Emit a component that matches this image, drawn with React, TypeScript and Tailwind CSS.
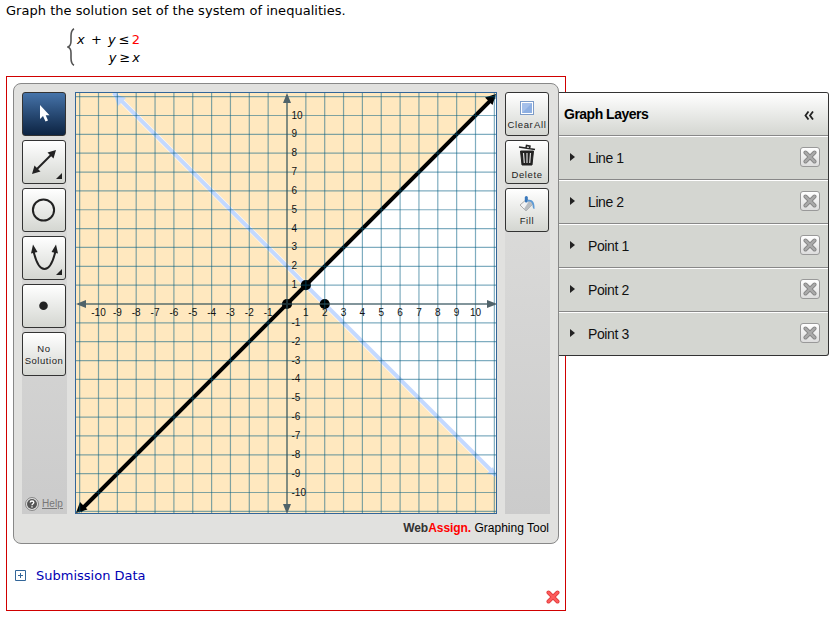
import type { ReactNode } from "react";

const UNIT = 18.85;
const CENTER = 211;
const gridSteps = Array.from({ length: 23 }, (_, i) => i - 11);
const labelSteps = gridSteps.filter((n) => n !== 0 && Math.abs(n) <= 10);
const layers = ["Line 1", "Line 2", "Point 1", "Point 2", "Point 3"];

const px = (x: number) => CENTER + x * UNIT;
const py = (y: number) => CENTER - y * UNIT;

function ToolButton({ active, menu, children }: { active?: boolean; menu?: boolean; children: ReactNode }) {
  return (
    <button
      type="button"
      className={
        active
          ? "relative flex h-11 w-11 flex-col items-center justify-center rounded-[3px] border border-[#333] bg-linear-to-b from-[#4674aa] to-[#0d2443]"
          : "relative flex h-11 w-11 flex-col items-center justify-center rounded-[3px] border border-[#333] bg-linear-to-b from-white to-[#d4d6d1]"
      }
    >
      {children}
      {menu && (
        <svg className="absolute right-[3px] bottom-[4px]" width="6" height="6">
          <path d="M6 0V6H0Z" fill="#222" />
        </svg>
      )}
    </button>
  );
}

function Graph() {
  return (
    <svg width="420" height="420" viewBox="0 0 420 420" className="block">
      <rect width="420" height="420" fill="#ffe8bf" />
      <path d={`M${px(1)} ${py(1)}L${px(12)} ${py(12)}V${py(-10)}Z`} fill="#fff" />

      <path d={`M${px(-9.2)} ${py(11.2)}L${px(11.1)} ${py(-9.1)}`} stroke="#fff" strokeOpacity="0.7" strokeWidth="5.4" />
      <path d={`M${px(-9.2)} ${py(11.2)}L${px(11.1)} ${py(-9.1)}`} stroke="#c3d9ff" strokeWidth="4" />
      <path d="M37 0L50 5L42 13ZM419.500 382.500L411 380.500L417 374Z" fill="#c3d9ff" />
      <path d={`M4 418L${px(11)} ${py(11)}`} stroke="#000" strokeWidth="4" />
      <path d="M0 420L4 409L11.500 416.500ZM420 1L409 4.500L416.500 12Z" fill="#000" />

      {[[0, 0], [1, 1], [2, 0]].map(([x, y]) => (
        <circle key={`${x},${y}`} cx={px(x)} cy={py(y)} r="5.1" fill="#000" />
      ))}

      <g stroke="#005b82" strokeOpacity="0.5" strokeWidth="1.2">
        {gridSteps.filter((n) => n !== 0).map((n) => (
          <path key={n} d={`M${px(n)} 0V420M0 ${py(n)}H420`} />
        ))}
      </g>

      <path d="M211 8V412M8 211H412" stroke="#2f4f58" strokeOpacity="0.6" strokeWidth="2" />
      <path d="M211 0L215 10H207ZM211 421L215 411H207ZM0 211L10 207V215ZM421 211L411 207V215Z" fill="#50636a" />

      <g fontFamily="'Liberation Sans', Arial, sans-serif" fontSize="10" fill="#111">
        {labelSteps.map((n) => (
          <text key={n} x={px(n)} y="222.500" textAnchor="middle">{n}</text>
        ))}
        {labelSteps.map((n) => (
          <text key={n} x="215.500" y={py(n) + 3}>{n}</text>
        ))}
      </g>
    </svg>
  );
}

function CrossIcon({ color, edge, size }: { color: string; edge: string; size: number }) {
  return (
    <svg width={size} height={size} viewBox="0 0 14 14">
      <path d="M2.500 2.500L11.500 11.500M11.500 2.500L2.500 11.500" stroke={edge} strokeWidth="4" strokeLinecap="round" />
      <path d="M2.500 2.500L11.500 11.500M11.500 2.500L2.500 11.500" stroke={color} strokeWidth="2.400" strokeLinecap="round" />
    </svg>
  );
}

function LeftTools() {
  return (
    <div className="flex h-[422px] w-[45px] flex-col gap-1 bg-linear-to-b from-[#e1e1df] to-[#cbcbcb]">
      <ToolButton active>
        <svg width="42" height="42" viewBox="0 0 42 42">
          <path d="M17 12V26L20 23L22.500 28.500L25 27.400L22.700 22.200H26.500Z" fill="#fff" />
        </svg>
      </ToolButton>
      <ToolButton menu>
        <svg width="42" height="42" viewBox="0 0 42 42">
          <path d="M13 29L29 13" stroke="#222" strokeWidth="2" />
          <path d="M9 33L11.500 24.500L17.500 30.500ZM33 9L30.500 17.500L24.500 11.500Z" fill="#222" />
        </svg>
      </ToolButton>
      <ToolButton>
        <svg width="42" height="42" viewBox="0 0 42 42">
          <circle cx="20.500" cy="21" r="10.600" fill="none" stroke="#222" strokeWidth="2" />
        </svg>
      </ToolButton>
      <ToolButton menu>
        <svg width="42" height="42" viewBox="0 0 42 42">
          <path d="M10.500 14C13 25 17 32 21.500 32S30 25 32.500 14" fill="none" stroke="#222" strokeWidth="2" />
          <path d="M10 7.500L14.500 15L8 16.500ZM33 7.500L28.500 15L35 16.500Z" fill="#222" />
        </svg>
      </ToolButton>
      <ToolButton>
        <svg width="42" height="42" viewBox="0 0 42 42">
          <circle cx="20.500" cy="20.700" r="4.300" fill="#222" />
        </svg>
      </ToolButton>
      <ToolButton>
        <span className="pt-0.5 text-[9.500px] leading-3 tracking-[0.55px] text-[#222]">No<br />Solution</span>
      </ToolButton>
      <div className="mt-auto flex items-center gap-[3px] pb-[3px] pl-[3px]">
        <svg width="14" height="14" viewBox="0 0 14 14">
          <circle cx="7" cy="7" r="6.400" fill="#eee" stroke="#666" strokeWidth="0.800" />
          <circle cx="7" cy="7" r="5" fill="#555" />
          <path d="M5.200 5.600C5.200 3.500 8.800 3.500 8.800 5.600C8.800 6.700 7 6.800 7 8.300M7 9.200V10.600" fill="none" stroke="#fff" strokeWidth="1.400" />
        </svg>
        <a href="#" className="text-[10px] leading-3 tracking-[0.1px] text-[#777] underline">Help</a>
      </div>
    </div>
  );
}

function RightTools() {
  return (
    <div className="flex h-[422px] w-[45px] flex-col gap-1 bg-linear-to-b from-[#e1e1df] to-[#cbcbcb] text-[9.500px] leading-3 tracking-[0.6px] text-[#222]">
      <ToolButton>
        <svg className="mt-[3px] mb-[4px]" width="14" height="14" viewBox="0 0 14 14">
          <rect x="0.500" y="0.500" width="13" height="13" fill="#fff" stroke="#7d9cc8" />
          <rect x="2" y="2" width="10" height="10" fill="#8dafe2" />
          <path d="M2 2H12L2 12Z" fill="#a5c0ea" />
        </svg>
        <span className="[word-spacing:-2px] whitespace-nowrap">Clear All</span>
      </ToolButton>
      <ToolButton>
        <svg className="mb-0.5" width="18" height="23" viewBox="0 0 18 23" fill="none" stroke="#222">
          <path d="M1 3L17 5.500M8 3.800L8.500 1.500L12 2.200L11.600 4.300" strokeWidth="1.500" />
          <path d="M2.500 7H15.500L14 21H4Z" fill="#222" />
          <path d="M5.500 9L6.300 19M9 9V19M12.500 9L11.700 19" stroke="#ddd" strokeWidth="1.200" />
        </svg>
        <span>Delete</span>
      </ToolButton>
      <ToolButton>
        <svg className="mt-[2px] mb-[3px]" width="18" height="17" viewBox="0 0 18 17">
          <path d="M2 10L9 4L15 9L8 16Z" fill="#f3f3f3" stroke="#999" strokeWidth="0.800" />
          <path d="M8 16L15 9L11 6L6 14Z" fill="#b9bdc1" />
          <path d="M10 5C14 4 17 7 16.500 14C15 14 14.500 12 14.500 9.500C13.500 7 12 6 10 7Z" fill="#5e9bd5" />
          <rect x="6.800" y="1" width="3" height="6.500" rx="1.500" fill="#3978bc" />
        </svg>
        <span>Fill</span>
      </ToolButton>
    </div>
  );
}

function GraphLayers() {
  return (
    <div className="mt-[9px] h-[264px] w-[270px] shrink-0 overflow-hidden rounded-r-[3px] border border-l-0 border-[#333] bg-[#d4d6d1] text-[#111]">
      <div className="flex h-[43px] items-center justify-between border-b border-[#888] bg-linear-to-b from-white to-[#d4d6d1] pr-[14px] pl-[5px]">
        <span className="text-[14px] font-bold tracking-[-0.5px] text-black">Graph Layers</span>
        <svg className="mt-[3px]" width="10" height="9" viewBox="0 0 10 9" fill="none" stroke="#222" strokeWidth="1.800">
          <path d="M4.500 0.500L1.500 4.500L4.500 8.500M9 0.500L6 4.500L9 8.500" />
        </svg>
      </div>
      {layers.map((name) => (
        <div key={name} className="flex h-11 items-center border-t border-b border-t-white border-b-[#888] pr-2 pb-[2px] pl-[11px] last:border-b-transparent">
          <svg width="5" height="8" viewBox="0 0 5 8"><path d="M0 0L5 4L0 8Z" fill="#222" /></svg>
          <span className="ml-[13px] flex-1 pt-px text-[14px] leading-5 tracking-[-0.4px]">{name}</span>
          <span className="flex h-5 w-5 items-center justify-center rounded-[3px] border border-[#999] bg-linear-to-b from-white to-[#ddd]">
            <CrossIcon color="#aaa" edge="#858585" size={14} />
          </span>
        </div>
      ))}
    </div>
  );
}

export default function App() {
  return (
    <div className="h-[633px] w-[838px] overflow-hidden bg-white font-['Liberation_Sans',Arial,sans-serif]">
      <div className="h-[76px] pt-[3px] pl-[6px] font-['DejaVu_Sans',Verdana,sans-serif] text-[13px] leading-4 text-black">
        <p className="tracking-[0.03px] whitespace-nowrap">Graph the solution set of the system of inequalities.</p>
        <div className="mt-[9px] flex pl-[61px]">
          <svg width="8" height="38" viewBox="0 0 8 38" fill="none" stroke="#555" strokeWidth="1.600">
            <path d="M7 0.700C4.500 2 4 4 4 8V13C4 16 3.500 18 1 19C3.500 20 4 22 4 25V30C4 34 4.500 36 7 37.300" />
          </svg>
          <div className="w-[65px] pt-[3px] pl-[2px] text-right leading-[18px] whitespace-nowrap">
            <div className="flex justify-between"><i>x</i><span>+</span><span><i>y</i><span className="mr-[2px] ml-[3px]">≤</span><span className="text-[#f00]">2</span></span></div>
            <div><i>y</i><span className="mr-[2px] ml-[3px]">≥</span><i>x</i></div>
          </div>
        </div>
      </div>

      <div className="ml-[6px] h-[535px] w-[560px] border border-[#d00000] pt-[6px] pl-[6px]">
        <div className="flex items-start">
          <div className="h-[461px] w-[546px] shrink-0 rounded-lg border border-[#888] bg-[#e1e1df] pt-2 pl-2">
            <div className="flex gap-2">
              <LeftTools />
              <div className="h-[422px] w-[422px] border border-[#336699]">
                <Graph />
              </div>
              <RightTools />
            </div>
            <div className="pt-[6px] pr-[9px] text-right text-xs leading-4 text-black">
              <span className="font-bold tracking-[-0.05px] text-[#333]">Web<span className="text-[#f00]">Assign.</span></span> Graphing Tool
            </div>
          </div>
          <GraphLayers />
        </div>

        <div className="mt-[24px] flex items-center gap-[10px] pl-[2px] font-['DejaVu_Sans',Verdana,sans-serif] text-[13px] leading-4 text-[#0000b4]">
          <svg className="-mt-0.5" width="11" height="11" viewBox="0 0 11 11" fill="none" stroke="#336699">
            <path d="M0.500 0.500H10.500V10.500H0.500ZM3 5.500H8M5.500 3V8" />
          </svg>
          <a href="#">Submission Data</a>
        </div>
        <div className="mt-[6px] flex justify-end pr-[5px]">
          <CrossIcon color="#ff5c5c" edge="#e03e3e" size={14} />
        </div>
      </div>
    </div>
  );
}
